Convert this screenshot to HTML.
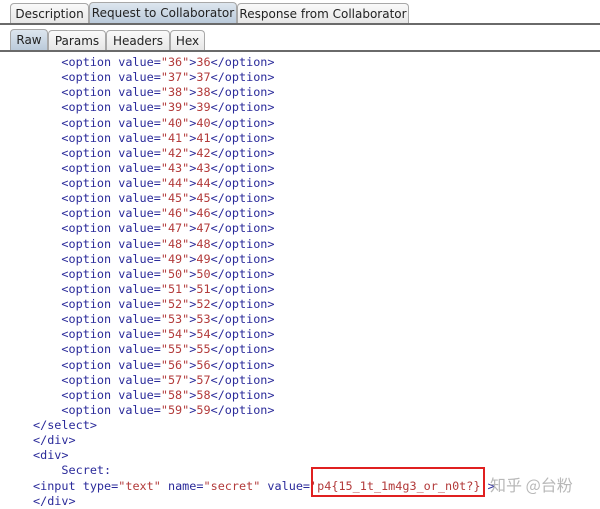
<html><head><style>
body{margin:0;width:600px;height:507px;background:#fff;position:relative;overflow:hidden;font-family:"DejaVu Sans","Liberation Sans",sans-serif}
.tab{position:absolute;height:20px;border:1px solid #a8a8a8;border-bottom:none;border-radius:4px 4px 0 0;background:linear-gradient(#fafafa,#e6e6e6);font-size:12px;color:#222;text-align:center;line-height:20px;box-sizing:border-box}
.sel{background:linear-gradient(#dde6ef,#b9c9da);}
.line{position:absolute;left:0;width:600px;height:2px;background:#6a6a6a}
pre{position:absolute;left:33px;top:55px;margin:0;font-family:"DejaVu Sans Mono",monospace;font-size:11.8px;line-height:15.13px;color:#2a2a9a}
.v{color:#b23a3a}
.box{position:absolute;left:311px;top:467px;width:174px;height:30px;border:2px solid #e02020;box-sizing:border-box}
.wm{position:absolute;left:490px;top:472px;font-family:"Noto Sans CJK SC",sans-serif;font-size:16px;color:#b8b8b8}
</style></head><body>
<div class="tab" style="left:10px;top:3px;width:79px">Description</div>
<div class="tab sel" style="left:89px;top:2px;width:148px;height:22px">Request to Collaborator</div>
<div class="tab" style="left:237px;top:3px;width:172px">Response from Collaborator</div>
<div class="line" style="top:23px"></div>
<div class="tab sel" style="left:10px;top:29px;width:38px;height:22px">Raw</div>
<div class="tab" style="left:48px;top:30px;width:58px">Params</div>
<div class="tab" style="left:106px;top:30px;width:64px">Headers</div>
<div class="tab" style="left:170px;top:30px;width:35px">Hex</div>
<div class="line" style="top:50px"></div>
<pre>    &lt;option value=<span class="v">"36"</span>&gt;<span class="v">36</span>&lt;/option&gt;
    &lt;option value=<span class="v">"37"</span>&gt;<span class="v">37</span>&lt;/option&gt;
    &lt;option value=<span class="v">"38"</span>&gt;<span class="v">38</span>&lt;/option&gt;
    &lt;option value=<span class="v">"39"</span>&gt;<span class="v">39</span>&lt;/option&gt;
    &lt;option value=<span class="v">"40"</span>&gt;<span class="v">40</span>&lt;/option&gt;
    &lt;option value=<span class="v">"41"</span>&gt;<span class="v">41</span>&lt;/option&gt;
    &lt;option value=<span class="v">"42"</span>&gt;<span class="v">42</span>&lt;/option&gt;
    &lt;option value=<span class="v">"43"</span>&gt;<span class="v">43</span>&lt;/option&gt;
    &lt;option value=<span class="v">"44"</span>&gt;<span class="v">44</span>&lt;/option&gt;
    &lt;option value=<span class="v">"45"</span>&gt;<span class="v">45</span>&lt;/option&gt;
    &lt;option value=<span class="v">"46"</span>&gt;<span class="v">46</span>&lt;/option&gt;
    &lt;option value=<span class="v">"47"</span>&gt;<span class="v">47</span>&lt;/option&gt;
    &lt;option value=<span class="v">"48"</span>&gt;<span class="v">48</span>&lt;/option&gt;
    &lt;option value=<span class="v">"49"</span>&gt;<span class="v">49</span>&lt;/option&gt;
    &lt;option value=<span class="v">"50"</span>&gt;<span class="v">50</span>&lt;/option&gt;
    &lt;option value=<span class="v">"51"</span>&gt;<span class="v">51</span>&lt;/option&gt;
    &lt;option value=<span class="v">"52"</span>&gt;<span class="v">52</span>&lt;/option&gt;
    &lt;option value=<span class="v">"53"</span>&gt;<span class="v">53</span>&lt;/option&gt;
    &lt;option value=<span class="v">"54"</span>&gt;<span class="v">54</span>&lt;/option&gt;
    &lt;option value=<span class="v">"55"</span>&gt;<span class="v">55</span>&lt;/option&gt;
    &lt;option value=<span class="v">"56"</span>&gt;<span class="v">56</span>&lt;/option&gt;
    &lt;option value=<span class="v">"57"</span>&gt;<span class="v">57</span>&lt;/option&gt;
    &lt;option value=<span class="v">"58"</span>&gt;<span class="v">58</span>&lt;/option&gt;
    &lt;option value=<span class="v">"59"</span>&gt;<span class="v">59</span>&lt;/option&gt;
&lt;/select&gt;
&lt;/div&gt;
&lt;div&gt;
    Secret:
&lt;input type=<span class="v">"text"</span> name=<span class="v">"secret"</span> value=<span class="v">'p4{15_1t_1m4g3_or_n0t?}'</span>&gt;
&lt;/div&gt;</pre>
<div class="box"></div>
<div class="wm">知乎 @台粉</div>
</body></html>
